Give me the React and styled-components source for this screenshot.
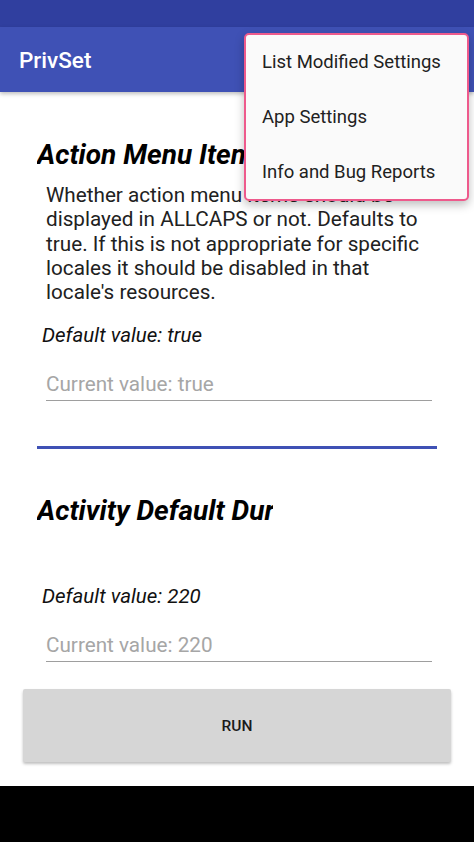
import React from 'react';
import styled, { createGlobalStyle } from 'styled-components';

const GlobalStyle = createGlobalStyle`
  html, body {
    margin: 0;
    padding: 0;
    background: #ffffff;
  }
  body {
    font-family: Roboto, "Noto Sans", sans-serif;
  }
`;

const settings = [
  {
    title: 'Action Menu Item Text All Caps',
    description:
      "Whether action menu items should be displayed in ALLCAPS or not. Defaults to true. If this is not appropriate for specific locales it should be disabled in that locale's resources.",
    defaultValue: 'true',
  },
  {
    title: 'Activity Default Duration',
    description: '',
    defaultValue: '220',
  },
];

const menuItems = ['List Modified Settings', 'App Settings', 'Info and Bug Reports'];

const App = () => {
  return (
    <Screen>
      <GlobalStyle />
      <StatusBar />
      <AppBar>
        <AppTitle>PrivSet</AppTitle>
      </AppBar>
      <Content>
        {settings.map((s, i) => (
          <Setting key={s.title}>
            {i > 0 && <Divider />}
            <Heading $first={i === 0}>{s.title}</Heading>
            {s.description ? (
              <Description>{s.description}</Description>
            ) : (
              <EmptyDescription />
            )}
            <DefaultValue>Default value: {s.defaultValue}</DefaultValue>
            <ValueInput placeholder={`Current value: ${s.defaultValue}`} />
          </Setting>
        ))}
        <RunButton>RUN</RunButton>
      </Content>
      <NavBar />
      <Menu>
        {menuItems.map((m) => (
          <MenuItem key={m}>{m}</MenuItem>
        ))}
      </Menu>
    </Screen>
  );
};

export default App;

const Screen = styled.div`
  position: relative;
  width: 474px;
  height: 842px;
  display: flex;
  flex-direction: column;
  overflow: hidden;
  background: #ffffff;
`;

const StatusBar = styled.div`
  height: 27px;
  background-color: #303f9f;
`;

const AppBar = styled.div`
  height: 65px;
  background-color: #3f51b5;
  display: flex;
  align-items: center;
  padding-left: 19px;
  box-shadow: 0 2px 4px rgba(0, 0, 0, 0.25);
  z-index: 1;
`;

const AppTitle = styled.div`
  color: #ffffff;
  font-size: 22.5px;
  font-weight: 500;
`;

const Content = styled.div`
  flex: 1;
  display: flex;
  flex-direction: column;
  padding-top: 46px;
`;

const Setting = styled.div`
  display: flex;
  flex-direction: column;
`;

const Divider = styled.div`
  height: 3px;
  margin: 45px 37px 0 37px;
  background-color: #3f51b5;
`;

const Heading = styled.div`
  margin: ${(p) => (p.$first ? '0' : '45px')} 0 0 37px;
  width: 236px;
  font-size: 28px;
  line-height: 34px;
  font-weight: 700;
  font-style: italic;
  color: #000000;
  white-space: nowrap;
  overflow: hidden;
`;

const Description = styled.div`
  margin: 11px 40px 0 46px;
  font-size: 20.7px;
  line-height: 24.3px;
  color: #212121;
`;

const EmptyDescription = styled.div`
  height: 37px;
`;

const DefaultValue = styled.div`
  margin: 18px 0 0 42px;
  font-size: 20.5px;
  line-height: 26px;
  font-style: italic;
  color: #111111;
`;

const ValueInput = styled.input`
  margin: 23px 42px 0 46px;
  padding: 0 0 3px 0;
  border: none;
  border-bottom: 1.5px solid #9e9e9e;
  outline: none;
  background: transparent;
  font-family: Roboto, sans-serif;
  font-size: 20.7px;
  line-height: 26px;
  height: 26px;
  color: #212121;

  &::placeholder {
    color: #a6a6a6;
  }
`;

const RunButton = styled.button`
  margin: 27px 23px 0 23px;
  height: 73px;
  border: none;
  border-radius: 2px;
  background-color: #d6d6d6;
  box-shadow: 0 2px 3px rgba(0, 0, 0, 0.25);
  font-family: Roboto, sans-serif;
  font-size: 15.5px;
  font-weight: 500;
  color: #1a1a1a;
`;

const NavBar = styled.div`
  height: 56px;
  background-color: #000000;
`;

const Menu = styled.div`
  position: absolute;
  top: 33px;
  left: 244px;
  width: 221px;
  display: flex;
  flex-direction: column;
  background-color: #fafafa;
  border: 2px solid #ee5a8c;
  border-radius: 5px;
  box-shadow: 0 4px 10px rgba(0, 0, 0, 0.25);
  z-index: 2;
`;

const MenuItem = styled.div`
  height: 54.7px;
  display: flex;
  align-items: center;
  padding-left: 16px;
  font-size: 18.5px;
  color: #212121;
`;
